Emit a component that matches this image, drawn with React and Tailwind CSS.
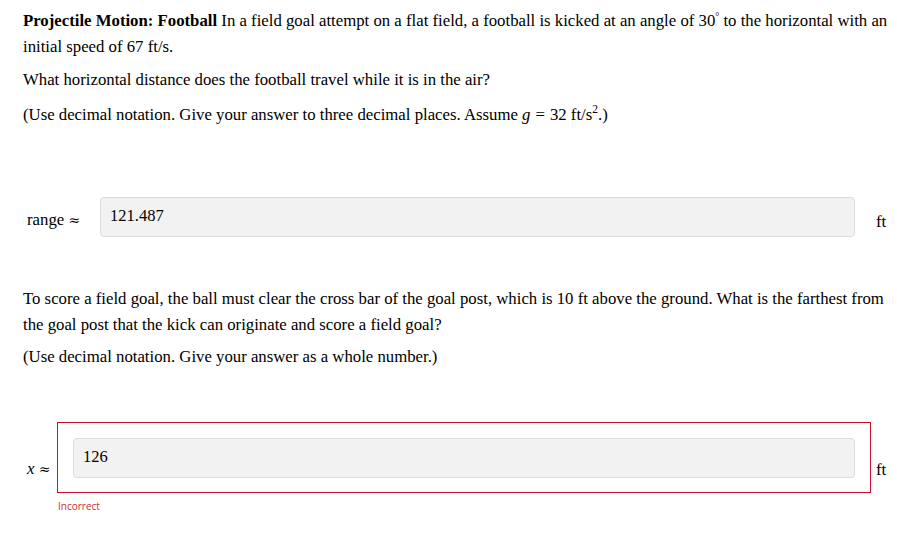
export default function App() {
    const serif = { fontFamily: '"Liberation Serif", "Times New Roman", serif' };
    const approx = <span className="text-[14px]" style={{ fontFamily: '"DejaVu Serif", serif' }}>≈</span>;
    return (
        <div className="min-h-[535px] bg-white pl-[23px] pr-[5px] pt-[8px] text-[16.75px] leading-[26px] text-black" style={serif}>
            {/* Question part 1 */}
            <p>
                <b>Projectile Motion: Football</b> In a field goal attempt on a flat field, a football is kicked at an angle of 30<sup className="-top-[6px] text-[10px]">°</sup> to the horizontal with an initial speed of 67 ft/s.
            </p>
            <p className="mt-[7px]">What horizontal distance does the football travel while it is in the air?</p>
            <p className="mt-[9px]">
                (Use decimal notation. Give your answer to three decimal places. Assume <i>g</i>
                <span className="mx-[5px]">=</span>32 ft/s
                <sup className="-top-[7px] text-[11.5px]">2</sup>.)
            </p>

            <div className="mt-[69px] flex items-center">
                <div className="w-[77px] pl-[4px] pt-[5px]">range {approx}</div>
                <div className="h-[40px] flex-1 rounded-[4px] border border-[#dcdcdc] bg-[#f2f2f2] pl-[9px] pt-[5px] text-[16.5px]">121.487</div>
                <div className="w-[37px] pl-[21px] pt-[9px]">ft</div>
            </div>

            {/* Question part 2 */}
            <p className="mt-[49px]">
                To score a field goal, the ball must clear the cross bar of the goal post, which is 10 ft above the ground. What is the farthest from the goal post that the kick can originate and score a field goal?
            </p>
            <p className="mt-[6px]">(Use decimal notation. Give your answer as a whole number.)</p>

            <div className="mt-[52px] flex items-center">
                <div className="w-[34px] pl-[4px] pt-[22px] whitespace-nowrap">
                    <i>x</i> {approx}
                </div>
                <div className="flex-1 border border-[#c8102e] px-[15px] pb-[14px] pt-[15px]">
                    <div className="h-[40px] rounded-[4px] border border-[#dcdcdc] bg-[#f2f2f2] pl-[9px] pt-[5px] text-[16.5px]">126</div>
                </div>
                <div className="w-[21px] pl-[5px] pt-[24px]">ft</div>
            </div>
            <div
                className="ml-[35px] mt-[6px] text-[10px] leading-[14px] text-[#cf2a3a]"
                style={{ fontFamily: '"Open Sans", sans-serif' }}
            >
                Incorrect
            </div>
        </div>
    );
}
